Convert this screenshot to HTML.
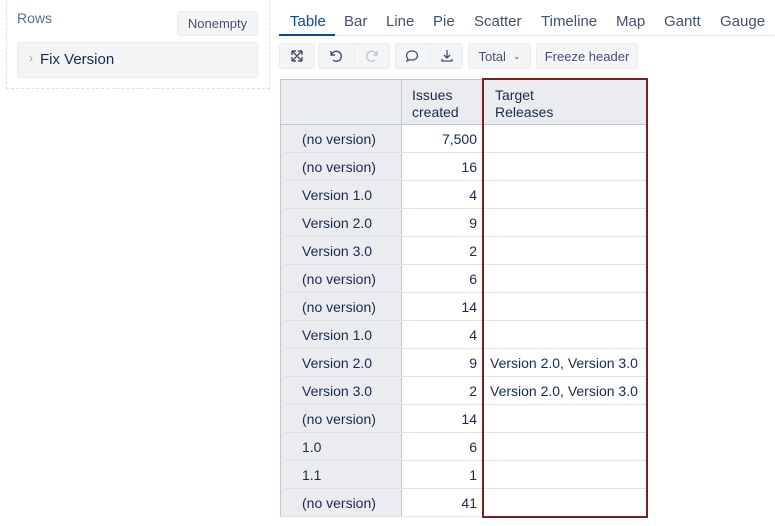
<!DOCTYPE html>
<html><head><style>
*{box-sizing:border-box;margin:0;padding:0}
body{width:775px;height:526px;background:#fff;font-family:"Liberation Sans",sans-serif;color:#172b4d;position:relative;overflow:hidden;font-size:14px}
.abs{position:absolute}
.btn{position:absolute;top:43px;height:26px;background:#f4f5f7;border:1px solid #ebecf0;border-radius:3px;font-size:13px;color:#42526e;display:flex;align-items:center;justify-content:center}
table{position:absolute;left:280px;top:79px;border-collapse:collapse;font-size:14px}
td{height:28px;border:1px solid #dfe1e6;padding:0 6px 0 0}
td.h{background:#ebecf0;padding-left:21px;border-color:#c1c7d0;border-bottom-color:#dfe1e6}
td.n{text-align:right;width:82px}
td.t{width:164px;padding-left:6px;border-left:1px solid #c1c7d0}
tr.hd td{height:45px;background:#ebecf0;vertical-align:top;padding-top:7px;line-height:17px;border-color:#c1c7d0}
.tab{position:absolute;top:13px;font-size:15px;color:#42526e}
</style></head><body>
<div class="abs" style="left:6px;top:-2px;width:264px;height:91px;border:1px dashed #dfe1e6"></div>
<div class="abs" style="left:17px;top:10px;font-size:14px;color:#5e6c84">Rows</div>
<div class="abs" style="left:177px;top:11px;width:81px;height:25px;background:#f4f5f7;border:1px solid #ebecf0;border-radius:3px;font-size:13px;color:#42526e;display:flex;align-items:center;justify-content:center">Nonempty</div>
<div class="abs" style="left:17px;top:42px;width:241px;height:36px;background:#f4f5f7;border:1px solid #ebecf0;border-radius:3px"></div>
<div class="abs" style="left:29px;top:51px;font-size:12px;color:#97a0af">›</div>
<div class="abs" style="left:40px;top:51px;font-size:15px;color:#172b4d">Fix Version</div>

<div class="tab" style="left:290px;color:#0747a6">Table</div>
<div class="tab" style="left:344px">Bar</div>
<div class="tab" style="left:386px">Line</div>
<div class="tab" style="left:433px">Pie</div>
<div class="tab" style="left:474px">Scatter</div>
<div class="tab" style="left:541px">Timeline</div>
<div class="tab" style="left:616px">Map</div>
<div class="tab" style="left:664px">Gantt</div>
<div class="tab" style="left:720px">Gauge</div>
<div class="abs" style="left:279px;top:35px;width:496px;height:1px;background:#ebecf0"></div>
<div class="abs" style="left:279px;top:34px;width:56px;height:2px;background:#0747a6"></div>

<div class="btn" style="left:279px;width:36px"><svg width="16" height="16" viewBox="0 0 16 16" fill="none" stroke="#42526e" stroke-width="1.4"><path d="M3 3l10 10M13 3L3 13M3 3v4M3 3h4M13 3v4M13 3H9M3 13V9M3 13h4M13 13V9M13 13H9"/></svg></div>
<div class="btn" style="left:318px;width:72px"></div>
<div class="abs" style="left:354px;top:44px;width:1px;height:24px;background:#ebecf0"></div>
<svg class="abs" style="left:328px;top:48px" width="16" height="16" viewBox="0 0 16 16" fill="none" stroke="#42526e" stroke-width="1.4"><path d="M3 3v4h4M3.5 7A5 5 0 1 1 5 12"/></svg>
<svg class="abs" style="left:364px;top:48px" width="16" height="16" viewBox="0 0 16 16" fill="none" stroke="#c1c7d0" stroke-width="1.4"><path d="M13 3v4H9M12.5 7A5 5 0 1 0 11 12"/></svg>
<div class="btn" style="left:395px;width:68px"></div>
<div class="abs" style="left:430px;top:44px;width:1px;height:24px;background:#ebecf0"></div>
<svg class="abs" style="left:404px;top:48px" width="16" height="16" viewBox="0 0 16 16" fill="none" stroke="#42526e" stroke-width="1.3"><path d="M8 3c3.3 0 5.5 2 5.5 4.5S11.3 12 8 12c-.8 0-1.5-.1-2.2-.3L3 13l.8-2.3C3 9.8 2.5 8.7 2.5 7.5 2.5 5 4.7 3 8 3z"/></svg>
<svg class="abs" style="left:439px;top:48px" width="16" height="16" viewBox="0 0 16 16" fill="none" stroke="#42526e" stroke-width="1.3"><path d="M8 2v8M5 7l3 3 3-3M3 11v2h10v-2"/></svg>
<div class="btn" style="left:468px;width:63px">Total <span style="font-size:9px;margin-left:7px">⌄</span></div>
<div class="btn" style="left:536px;width:102px">Freeze header</div>

<table>
<tr class="hd"><td style="width:121px"></td><td style="width:82px;padding-left:10px">Issues<br>created</td><td style="width:164px;padding-left:11px">Target<br>Releases</td></tr>
<tr><td class="h">(no version)</td><td class="n">7,500</td><td class="t"></td></tr>
<tr><td class="h">(no version)</td><td class="n">16</td><td class="t"></td></tr>
<tr><td class="h">Version 1.0</td><td class="n">4</td><td class="t"></td></tr>
<tr><td class="h">Version 2.0</td><td class="n">9</td><td class="t"></td></tr>
<tr><td class="h">Version 3.0</td><td class="n">2</td><td class="t"></td></tr>
<tr><td class="h">(no version)</td><td class="n">6</td><td class="t"></td></tr>
<tr><td class="h">(no version)</td><td class="n">14</td><td class="t"></td></tr>
<tr><td class="h">Version 1.0</td><td class="n">4</td><td class="t"></td></tr>
<tr><td class="h">Version 2.0</td><td class="n">9</td><td class="t">Version 2.0, Version 3.0</td></tr>
<tr><td class="h">Version 3.0</td><td class="n">2</td><td class="t">Version 2.0, Version 3.0</td></tr>
<tr><td class="h">(no version)</td><td class="n">14</td><td class="t"></td></tr>
<tr><td class="h">1.0</td><td class="n">6</td><td class="t"></td></tr>
<tr><td class="h">1.1</td><td class="n">1</td><td class="t"></td></tr>
<tr><td class="h">(no version)</td><td class="n">41</td><td class="t"></td></tr>
</table>
<div class="abs" style="left:482px;top:78px;width:166px;height:440px;border:2px solid #7a1f1f;pointer-events:none"></div>
</body></html>
